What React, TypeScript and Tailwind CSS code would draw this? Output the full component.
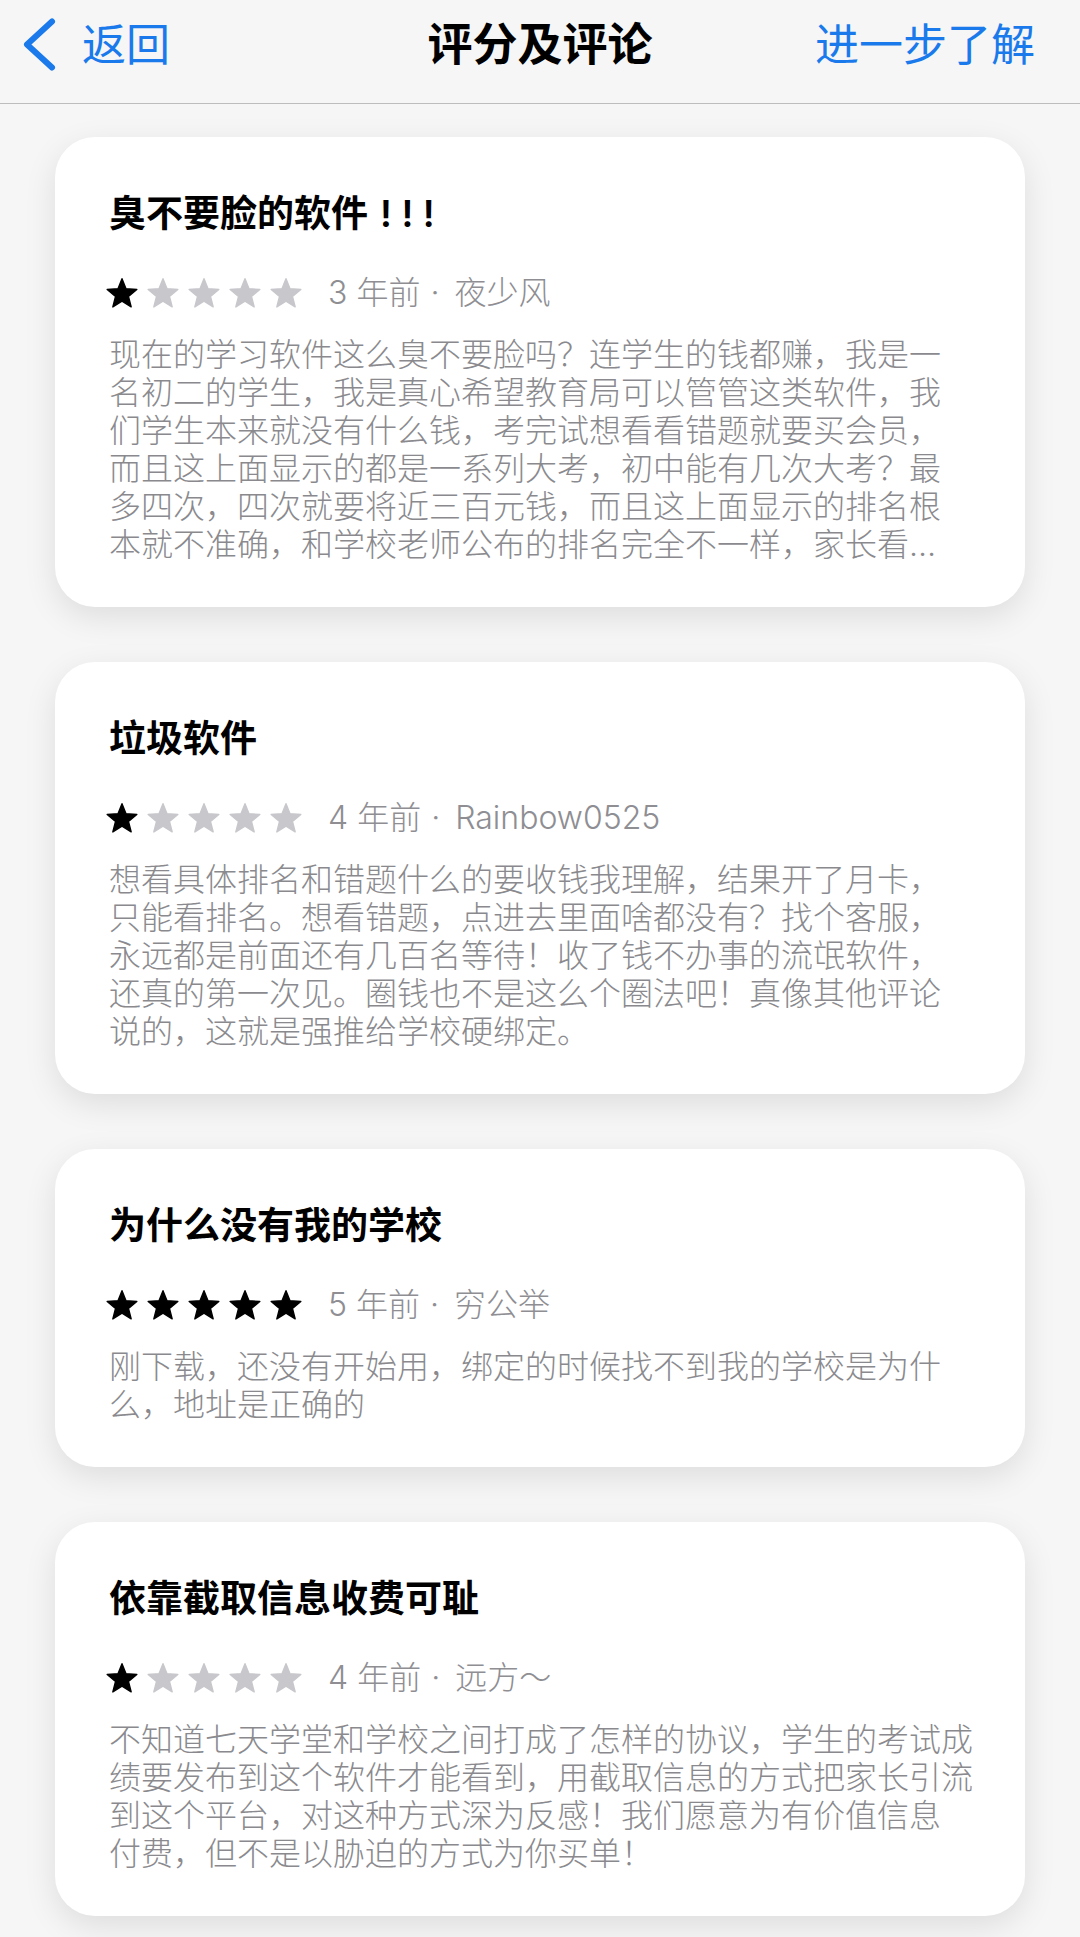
import React from "react";

type Review = {
  title: string;
  bang?: boolean;
  stars: number;
  time: string;
  author: string;
  lines: string[];
};

const reviews: Review[] = [
  {
    title: "臭不要脸的软件",
    bang: true,
    stars: 1,
    time: "3 年前",
    author: "夜少风",
    lines: [
      "现在的学习软件这么臭不要脸吗？连学生的钱都赚，我是一",
      "名初二的学生，我是真心希望教育局可以管管这类软件，我",
      "们学生本来就没有什么钱，考完试想看看错题就要买会员，",
      "而且这上面显示的都是一系列大考，初中能有几次大考？最",
      "多四次，四次就要将近三百元钱，而且这上面显示的排名根",
      "本就不准确，和学校老师公布的排名完全不一样，家长看…",
    ],
  },
  {
    title: "垃圾软件",
    stars: 1,
    time: "4 年前",
    author: "Rainbow0525",
    lines: [
      "想看具体排名和错题什么的要收钱我理解，结果开了月卡，",
      "只能看排名。想看错题，点进去里面啥都没有？找个客服，",
      "永远都是前面还有几百名等待！收了钱不办事的流氓软件，",
      "还真的第一次见。圈钱也不是这么个圈法吧！真像其他评论",
      "说的，这就是强推给学校硬绑定。",
    ],
  },
  {
    title: "为什么没有我的学校",
    stars: 5,
    time: "5 年前",
    author: "穷公举",
    lines: [
      "刚下载，还没有开始用，绑定的时候找不到我的学校是为什",
      "么，地址是正确的",
    ],
  },
  {
    title: "依靠截取信息收费可耻",
    stars: 1,
    time: "4 年前",
    author: "远方～",
    lines: [
      "不知道七天学堂和学校之间打成了怎样的协议，学生的考试成",
      "绩要发布到这个软件才能看到，用截取信息的方式把家长引流",
      "到这个平台，对这种方式深为反感！我们愿意为有价值信息",
      "付费，但不是以胁迫的方式为你买单！",
    ],
  },
];

// five-pointed star outline for the rating row
const starPoints = Array.from({ length: 10 }, (_, i) => {
  const angle = ((-90 + i * 36) * Math.PI) / 180;
  const r = i % 2 === 0 ? 15.6 : 6.8;
  return `${(16 + r * Math.cos(angle)).toFixed(2)},${(17.3 + r * Math.sin(angle)).toFixed(2)}`;
}).join(" ");

function Star({ filled }: { filled: boolean }) {
  const color = filled ? "#000000" : "#c7c7cc";
  return (
    <svg width="32" height="32" viewBox="0 0 32 32" className="shrink-0">
      <polygon
        points={starPoints}
        fill={color}
        stroke={color}
        strokeWidth="1.4"
        strokeLinejoin="round"
      />
    </svg>
  );
}

function ReviewCard({ review }: { review: Review }) {
  return (
    <div className="rounded-[40px] bg-white pl-[54px] pr-[30px] pt-[55px] pb-[43px] shadow-[0_10px_32px_rgba(0,0,0,0.10)]">
      <h2 className="flex items-baseline text-[37px] leading-[44px] font-semibold text-black whitespace-nowrap">
        <span>{review.title}</span>
        {review.bang && (
          <span className="ml-[12px] tracking-[9.5px]">!!!</span>
        )}
      </h2>
      <div className="mt-[37px] flex h-[40px] items-center">
        <div className="-ml-[3px] flex items-center gap-[9px]">
          {[0, 1, 2, 3, 4].map((i) => (
            <Star key={i} filled={i < review.stars} />
          ))}
        </div>
        <div className="ml-[26px] flex items-center text-[32px] leading-[40px] font-light text-[#8e8e93] whitespace-nowrap">
          <span>{review.time}</span>
          <span className="ml-[10px] mr-[15px]">·</span>
          <span>{review.author}</span>
        </div>
      </div>
      <div className="mt-[23px] text-[32px] leading-[38px] font-light text-[#8a8a8e]">
        {review.lines.map((line, i) => (
          <div key={i} className="whitespace-nowrap">
            {line}
          </div>
        ))}
      </div>
    </div>
  );
}

export default function App() {
  return (
    <div className="min-h-screen bg-[#f6f6f6] font-['Inter','Noto_Sans_CJK_SC',sans-serif]">
      <header className="h-[104px] border-b border-[#bdbdbd] bg-[#f6f6f6]">
        <div className="grid h-[89px] grid-cols-[1fr_auto_1fr] items-center">
          <div className="flex items-center pl-[22px] text-[#1a7aeb]">
            <svg width="36" height="56" viewBox="0 0 36 56" className="shrink-0">
              <polyline
                points="30,4.5 5,27.5 30,50.5"
                fill="none"
                stroke="#1a7aeb"
                strokeWidth="6"
                strokeLinecap="round"
                strokeLinejoin="round"
              />
            </svg>
            <span className="ml-[24px] text-[44px] leading-[52px]">返回</span>
          </div>
          <h1 className="text-[45px] leading-[52px] font-semibold text-black">
            评分及评论
          </h1>
          <div className="flex justify-end pr-[45px]">
            <span className="text-[44px] leading-[52px] text-[#1a7aeb]">
              进一步了解
            </span>
          </div>
        </div>
      </header>
      <main className="flex flex-col gap-[55px] px-[55px] pt-[33px] pb-[22px]">
        {reviews.map((r, i) => (
          <ReviewCard key={i} review={r} />
        ))}
      </main>
    </div>
  );
}
